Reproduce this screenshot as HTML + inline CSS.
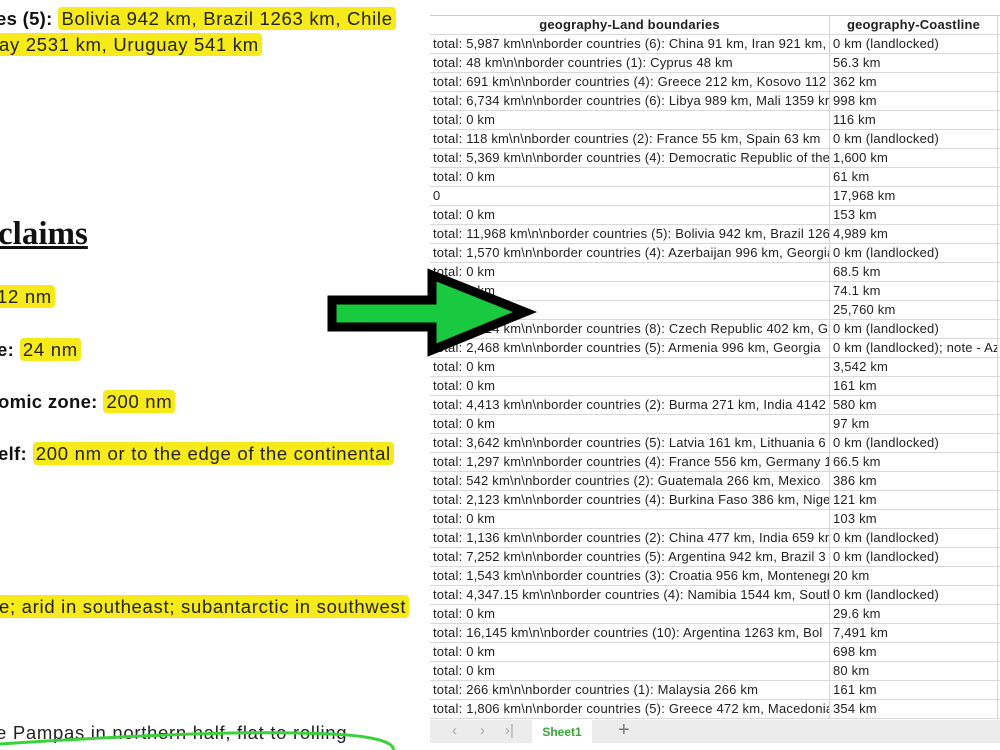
<!DOCTYPE html>
<html><head><meta charset="utf-8"><style>
*{margin:0;padding:0;box-sizing:border-box}
body{width:1000px;height:750px;background:#fff;position:relative;overflow:hidden;font-family:"Liberation Sans",sans-serif}
.t{position:absolute;font-size:18.5px;letter-spacing:0.7px;color:#222;white-space:nowrap;line-height:22px}
.t b{color:#111;letter-spacing:0.3px}
.hl{background:#f7ea1a;padding:1px 3px;border-radius:4px}
#sheet{position:absolute;left:430px;top:15px;width:570px}
.r{display:flex;height:19px;border-bottom:1px solid #d9d9d9;font-size:13px;line-height:18px;color:#222;letter-spacing:0.2px}
.c1{width:400px;border-right:1px solid #d4d4d4;padding-left:3px;overflow:hidden;white-space:nowrap}
.c2{width:168px;border-right:1px solid #d4d4d4;padding-left:3px;overflow:hidden;white-space:nowrap}
.h{height:20px;font-weight:bold;text-align:center;border-top:1px solid #ccc}
.h .c1,.h .c2{padding:0}
#tabs{position:absolute;left:430px;top:720px;width:570px;height:23px;background:#ececec;font-size:12px;color:#aaa}
</style></head><body>
<div class="t" style="left:-4px;top:8px"><b>es (5):</b> <span class="hl">Bolivia 942 km, Brazil 1263 km, Chile</span></div>
<div class="t" style="left:-4px;top:34px"><span class="hl">ay 2531 km, Uruguay 541 km</span></div>
<div class="t" style="left:-2px;top:215px;font-family:'Liberation Serif',serif;font-weight:bold;font-size:33px;letter-spacing:0;line-height:38px;text-decoration:underline;color:#111">claims</div>
<div class="t" style="left:-6px;top:286px"><span class="hl">12 nm</span></div>
<div class="t" style="left:-3px;top:339px"><b>e:</b> <span class="hl">24 nm</span></div>
<div class="t" style="left:-2px;top:391px"><b>omic zone:</b> <span class="hl">200 nm</span></div>
<div class="t" style="left:-2px;top:443px"><b>elf:</b> <span class="hl">200 nm or to the edge of the continental</span></div>
<div class="t" style="left:-4px;top:596px"><span class="hl">e; arid in southeast; subantarctic in southwest</span></div>
<div class="t" style="left:-4px;top:722px">e Pampas in northern half, flat to rolling</div>
<svg style="position:absolute;left:0;top:700px" width="420" height="50"><path d="M0 44 C120 36 250 30 330 34 C380 36 395 44 393 50" fill="none" stroke="#3ad23a" stroke-width="3"/></svg>
<div id="sheet">
<div class="r h"><div class="c1">geography-Land boundaries</div><div class="c2">geography-Coastline</div></div>
<div class="r"><div class="c1">total: 5,987 km\n\nborder countries (6): China 91 km, Iran 921 km,</div><div class="c2">0 km (landlocked)</div></div>
<div class="r"><div class="c1">total: 48 km\n\nborder countries (1): Cyprus 48 km</div><div class="c2">56.3 km</div></div>
<div class="r"><div class="c1">total: 691 km\n\nborder countries (4): Greece 212 km, Kosovo 112</div><div class="c2">362 km</div></div>
<div class="r"><div class="c1">total: 6,734 km\n\nborder countries (6): Libya 989 km, Mali 1359 km</div><div class="c2">998 km</div></div>
<div class="r"><div class="c1">total: 0 km</div><div class="c2">116 km</div></div>
<div class="r"><div class="c1">total: 118 km\n\nborder countries (2): France 55 km, Spain 63 km</div><div class="c2">0 km (landlocked)</div></div>
<div class="r"><div class="c1">total: 5,369 km\n\nborder countries (4): Democratic Republic of the</div><div class="c2">1,600 km</div></div>
<div class="r"><div class="c1">total: 0 km</div><div class="c2">61 km</div></div>
<div class="r"><div class="c1">0</div><div class="c2">17,968 km</div></div>
<div class="r"><div class="c1">total: 0 km</div><div class="c2">153 km</div></div>
<div class="r"><div class="c1">total: 11,968 km\n\nborder countries (5): Bolivia 942 km, Brazil 1263</div><div class="c2">4,989 km</div></div>
<div class="r"><div class="c1">total: 1,570 km\n\nborder countries (4): Azerbaijan 996 km, Georgia</div><div class="c2">0 km (landlocked)</div></div>
<div class="r"><div class="c1">total: 0 km</div><div class="c2">68.5 km</div></div>
<div class="r"><div class="c1">total: 0 km</div><div class="c2">74.1 km</div></div>
<div class="r"><div class="c1"></div><div class="c2">25,760 km</div></div>
<div class="r"><div class="c1">total: 2,524 km\n\nborder countries (8): Czech Republic 402 km, G</div><div class="c2">0 km (landlocked)</div></div>
<div class="r"><div class="c1">total: 2,468 km\n\nborder countries (5): Armenia 996 km, Georgia</div><div class="c2">0 km (landlocked); note - Az</div></div>
<div class="r"><div class="c1">total: 0 km</div><div class="c2">3,542 km</div></div>
<div class="r"><div class="c1">total: 0 km</div><div class="c2">161 km</div></div>
<div class="r"><div class="c1">total: 4,413 km\n\nborder countries (2): Burma 271 km, India 4142</div><div class="c2">580 km</div></div>
<div class="r"><div class="c1">total: 0 km</div><div class="c2">97 km</div></div>
<div class="r"><div class="c1">total: 3,642 km\n\nborder countries (5): Latvia 161 km, Lithuania 6</div><div class="c2">0 km (landlocked)</div></div>
<div class="r"><div class="c1">total: 1,297 km\n\nborder countries (4): France 556 km, Germany 1</div><div class="c2">66.5 km</div></div>
<div class="r"><div class="c1">total: 542 km\n\nborder countries (2): Guatemala 266 km, Mexico</div><div class="c2">386 km</div></div>
<div class="r"><div class="c1">total: 2,123 km\n\nborder countries (4): Burkina Faso 386 km, Niger</div><div class="c2">121 km</div></div>
<div class="r"><div class="c1">total: 0 km</div><div class="c2">103 km</div></div>
<div class="r"><div class="c1">total: 1,136 km\n\nborder countries (2): China 477 km, India 659 km</div><div class="c2">0 km (landlocked)</div></div>
<div class="r"><div class="c1">total: 7,252 km\n\nborder countries (5): Argentina 942 km, Brazil 3</div><div class="c2">0 km (landlocked)</div></div>
<div class="r"><div class="c1">total: 1,543 km\n\nborder countries (3): Croatia 956 km, Montenegro</div><div class="c2">20 km</div></div>
<div class="r"><div class="c1">total: 4,347.15 km\n\nborder countries (4): Namibia 1544 km, South</div><div class="c2">0 km (landlocked)</div></div>
<div class="r"><div class="c1">total: 0 km</div><div class="c2">29.6 km</div></div>
<div class="r"><div class="c1">total: 16,145 km\n\nborder countries (10): Argentina 1263 km, Bol</div><div class="c2">7,491 km</div></div>
<div class="r"><div class="c1">total: 0 km</div><div class="c2">698 km</div></div>
<div class="r"><div class="c1">total: 0 km</div><div class="c2">80 km</div></div>
<div class="r"><div class="c1">total: 266 km\n\nborder countries (1): Malaysia 266 km</div><div class="c2">161 km</div></div>
<div class="r"><div class="c1">total: 1,806 km\n\nborder countries (5): Greece 472 km, Macedonia</div><div class="c2">354 km</div></div>
</div>
<div id="tabs">
<span style="position:absolute;left:22px;top:2px;font-size:15px">&#x2039;</span>
<span style="position:absolute;left:50px;top:2px;font-size:15px">&#x203A;</span>
<span style="position:absolute;left:75px;top:2px;font-size:15px">&#x203A;|</span>
<div style="position:absolute;left:102px;top:0;width:60px;height:23px;background:#fff;color:#3aa33a;font-weight:bold;text-align:center;line-height:24px">Sheet1</div>
<span style="position:absolute;left:188px;top:-1px;font-size:20px;color:#777">+</span>
</div>
<svg style="position:absolute;left:320px;top:265px" width="220" height="100">
<polygon points="12,35 112,35 112,10 205,47 112,85 112,62 12,62" fill="#19c93f" stroke="#000" stroke-width="9" stroke-linejoin="miter"/>
</svg>
</body></html>
